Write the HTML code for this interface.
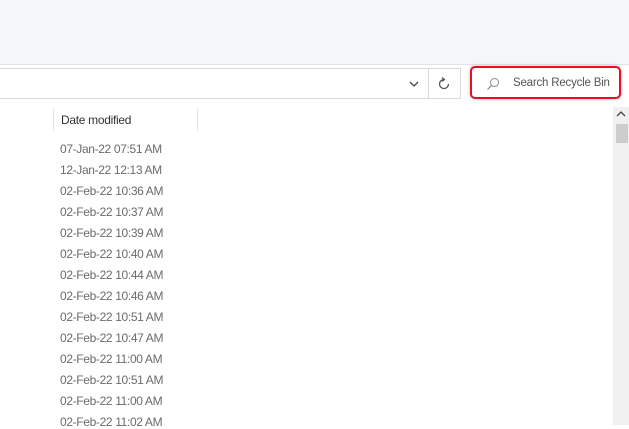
<!DOCTYPE html><html><head><style>
body{margin:0;width:629px;height:425px;overflow:hidden;background:#fff;font-family:"Liberation Sans",sans-serif;position:relative}
.top{position:absolute;left:0;top:0;width:629px;height:64px;background:#f5f6f7;border-bottom:1px solid #e3e3e3}
.addr{position:absolute;left:-2px;top:68px;width:463px;height:31px;border:1px solid #d9d9d9;box-sizing:border-box}
.div{position:absolute;top:68px;width:1px;height:31px;background:#d9d9d9}
.search{position:absolute;left:470px;top:66px;width:151px;height:33px;border:2px solid #e81123;border-radius:5px;box-sizing:border-box;box-shadow:0 0 3px #bbb}
.search span{position:absolute;left:41px;top:9px;font-size:11.5px;color:#555;letter-spacing:-0.2px}
.hdr{position:absolute;left:61px;top:113px;font-size:12px;color:#333;letter-spacing:-0.3px}
.sep{position:absolute;top:108px;width:1px;height:23px;background:#e5e5e5}
.row{position:absolute;left:60px;font-size:12px;color:#6b6b6b;letter-spacing:-0.35px}
.sb{position:absolute;left:613px;top:107px;width:16px;height:318px;background:#f0f0f0}
.thumb{position:absolute;left:616px;top:124px;width:12px;height:19px;background:#cdcdcd}
</style></head><body>
<div class="top"></div>
<div class="addr"></div>
<div class="div" style="left:428px"></div>
<svg style="position:absolute;left:408px;top:79px" width="12" height="10"><path d="M2 3l4 4 4-4" stroke="#555" stroke-width="1.5" fill="none"/></svg>
<svg style="position:absolute;left:437px;top:77px" width="14" height="14"><path d="M7 2.5a4.5 4.5 0 1 0 4.5 4.5" stroke="#555" stroke-width="1.3" fill="none"/><path d="M5 0.5l2.5 2-2.5 2" stroke="#555" stroke-width="1.2" fill="none"/></svg>
<div class="search"><svg style="position:absolute;left:14px;top:9px" width="14" height="14"><circle cx="8.5" cy="5.5" r="4" stroke="#888" stroke-width="1" fill="none"/><path d="M5.5 8.5L1.5 12.5" stroke="#888" stroke-width="1.2"/></svg><span>Search Recycle Bin</span></div>
<div class="sep" style="left:53px"></div><div class="sep" style="left:197px"></div>
<div class="hdr">Date modified</div>
<div class="row" style="top:142px">07-Jan-22 07:51 AM</div>
<div class="row" style="top:163px">12-Jan-22 12:13 AM</div>
<div class="row" style="top:184px">02-Feb-22 10:36 AM</div>
<div class="row" style="top:205px">02-Feb-22 10:37 AM</div>
<div class="row" style="top:226px">02-Feb-22 10:39 AM</div>
<div class="row" style="top:247px">02-Feb-22 10:40 AM</div>
<div class="row" style="top:268px">02-Feb-22 10:44 AM</div>
<div class="row" style="top:289px">02-Feb-22 10:46 AM</div>
<div class="row" style="top:310px">02-Feb-22 10:51 AM</div>
<div class="row" style="top:331px">02-Feb-22 10:47 AM</div>
<div class="row" style="top:352px">02-Feb-22 11:00 AM</div>
<div class="row" style="top:373px">02-Feb-22 10:51 AM</div>
<div class="row" style="top:394px">02-Feb-22 11:00 AM</div>
<div class="row" style="top:415px">02-Feb-22 11:02 AM</div>
<div class="sb"></div><div class="thumb"></div>
<svg style="position:absolute;left:616px;top:110px" width="10" height="8"><path d="M1 6l4-4 4 4" stroke="#444" stroke-width="1.3" fill="none"/></svg>
</body></html>
